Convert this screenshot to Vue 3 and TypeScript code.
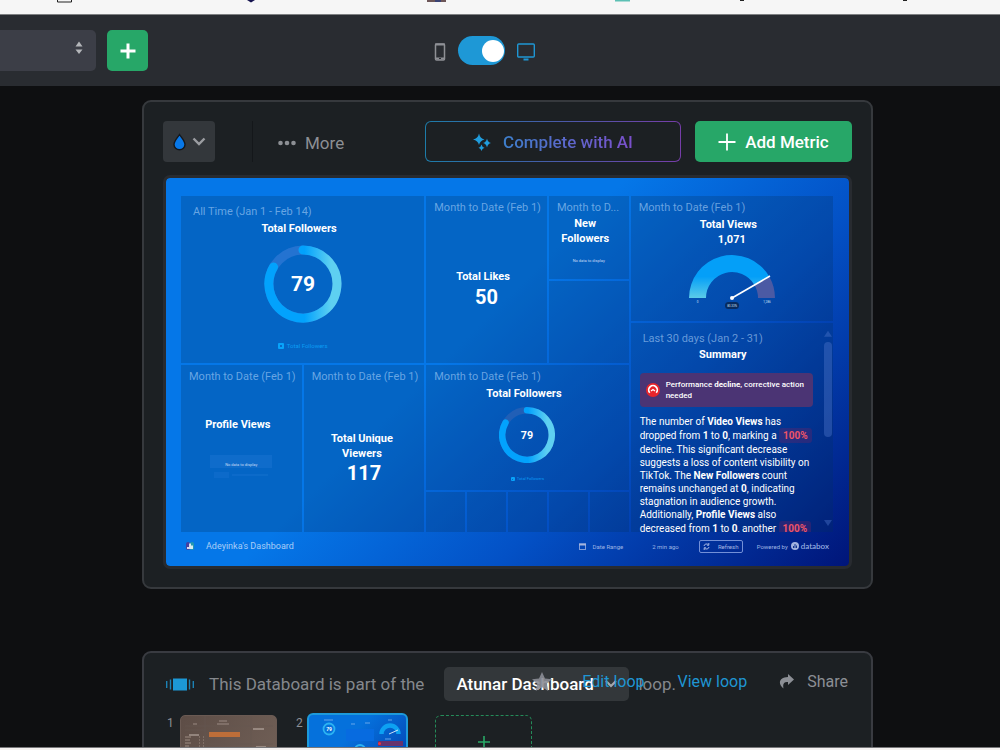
<script setup lang="ts">
import { ref } from 'vue'

interface ThumbRow { y: number; w: number }

const desktop = ref(true)
const showMain = ref(true)
const showSmall = ref(true)
const loopName = ref('Atunar Dashboard')
const spareTiles = ['e1', 'e2', 'e3', 'e4', 'e5']
const thumbRows: ThumbRow[] = [
  { y: 21, w: 6 }, { y: 24, w: 5 }, { y: 27, w: 6 }, { y: 30, w: 4 },
]
</script>

<template>
  <div class="app">
    <div class="tabstrip">
      <svg width="1000" height="14" viewBox="0 0 1000 14" aria-hidden="true">
        <path d="M57.500 0V2H71.500V0" fill="none" stroke="#222" />
        <path d="M247 0h8l-4 2.500z" fill="#15134f" />
        <rect x="427" width="19" height="2" fill="#6d5658" />
        <rect x="435" width="6" height="2" fill="#3b4474" />
        <rect x="615" width="15" height="1.500" fill="#5cc0b4" />
        <rect x="740" width="4" height="1" fill="#222" />
        <rect x="903" width="4" height="1" fill="#222" />
      </svg>
    </div>

    <header class="topbar">
      <div class="picker">
        <select class="board-select" aria-label="Databoard"><option></option></select>
        <svg class="updown" width="8" height="14" viewBox="0 0 8 14" aria-hidden="true">
          <path d="M0.500 5.500L4 0.500 7.500 5.500zM0.500 8.500L4 13 7.500 8.500z" fill="#b4b6ba" />
        </svg>
        <button class="add-board" aria-label="Add databoard">
          <svg width="16" height="16" viewBox="0 0 16 16"><path d="M8 0.500v15M0.500 8h15" stroke="#fff" stroke-width="3" /></svg>
        </button>
      </div>
      <div class="device">
        <svg width="12" height="18" viewBox="0 0 12 18" aria-hidden="true">
          <rect x="1.500" y="1" width="9" height="16" rx="1" fill="none" stroke="#8e9095" stroke-width="1.500" />
          <path d="M1 1.500h10M1 15.500h10" stroke="#8e9095" stroke-width="2.200" />
          <rect x="5" y="15" width="2" height="1" fill="#292c31" />
        </svg>
        <input v-model="desktop" class="switch" type="checkbox" aria-label="Desktop view" />
        <svg width="18" height="18" viewBox="0 0 18 18" aria-hidden="true">
          <rect x="0.700" y="1" width="16.600" height="13" rx="1" fill="none" stroke="#1f96d3" stroke-width="1.400" />
          <rect x="6.500" y="15.500" width="5" height="2" fill="#1f96d3" />
        </svg>
      </div>
    </header>

    <main class="stage">
      <section class="card designer">
        <div class="toolbar">
          <button class="color-btn" aria-label="Board colour">
            <svg width="13" height="18" viewBox="0 0 13 18">
              <path d="M6.500 1.500C4.500 4.800 1 8 1 11.500a5.500 5.200 0 0 0 11 0C12 8 8.500 4.800 6.500 1.500z" fill="#0878e8" stroke="#14181d" stroke-width="1.400" />
            </svg>
            <svg width="14" height="9" viewBox="0 0 14 9"><path d="M1.500 1.500L7 7l5.500-5.500" fill="none" stroke="#9b9da1" stroke-width="2.400" /></svg>
          </button>
          <span class="divider"></span>
          <button class="more-btn">
            <svg width="18" height="6" viewBox="0 0 18 6"><g fill="#8c8f94"><circle cx="2.500" cy="3" r="2.300" /><circle cx="9" cy="3" r="2.300" /><circle cx="15.500" cy="3" r="2.300" /></g></svg>
            More
          </button>
          <button class="ai-btn">
            <svg width="18" height="18" viewBox="0 0 18 18">
              <path d="M6 0.500Q7 5.500 11.500 6.500 7 7.500 6 12 5 7.500 0 6.500 5 5.500 6 0.500zM14 5.500Q14.800 9.200 18 10 14.800 10.800 14 14.500 13.200 10.800 10 10 13.200 9.200 14 5.500zM8.500 11.500Q9 14 11.500 14.700 9 15.400 8.500 18 8 15.400 5.500 14.700 8 14 8.500 11.500z" fill="#209ddd" />
            </svg>
            <span>Complete with AI</span>
          </button>
          <button class="metric-btn">
            <svg width="18" height="18" viewBox="0 0 18 18"><path d="M9 0.500v17M0.500 9h17" stroke="#fff" stroke-width="1.800" /></svg>
            Add Metric
          </button>
        </div>

        <div class="board">
          <div class="tiles">
            <article class="tile t-followers">
              <p class="period">All Time (Jan 1 - Feb 14)</p>
              <h3>Total Followers</h3>
              <svg class="ring" width="78" height="78" viewBox="0 0 78 78">
                <defs>
                  <linearGradient id="ringFill" gradientUnits="userSpaceOnUse" x1="0" y1="0" x2="78" y2="0">
                    <stop offset=".52" stop-color="#02a2fd" /><stop offset=".86" stop-color="#5ed0f1" />
                  </linearGradient>
                </defs>
                <circle cx="39" cy="39" r="34" fill="none" stroke="#2473d1" stroke-width="9" />
                <path d="M39 5A34 34 0 1 1 9.500 22" fill="none" stroke="url(#ringFill)" stroke-width="9" stroke-linecap="round" />
                <text x="39" y="46" text-anchor="middle" class="ring-num">79</text>
              </svg>
              <label class="legend"><input v-model="showMain" type="checkbox" />Total Followers</label>
            </article>

            <article class="tile t-likes">
              <p class="period">Month to Date (Feb 1)</p>
              <h3>Total Likes</h3>
              <p class="value">50</p>
            </article>

            <article class="tile t-new">
              <p class="period">Month to D...</p>
              <h3>New Followers</h3>
              <p class="nodata">No data to display</p>
            </article>

            <article class="tile t-views">
              <p class="period">Month to Date (Feb 1)</p>
              <h3>Total Views</h3>
              <p class="subvalue">1,071</p>
              <svg class="gauge" width="88" height="56" viewBox="0 0 88 56">
                <defs>
                  <linearGradient id="gaugeFill" x1="0" y1="0" x2="0" y2="1">
                    <stop offset=".5" stop-color="#049ff8" /><stop offset="1" stop-color="#5bcbe8" />
                  </linearGradient>
                </defs>
                <path d="M1 44A43 43 0 0 1 81.200 22.500L66.500 31A26 26 0 0 0 18 44z" fill="url(#gaugeFill)" />
                <path d="M81.200 22.500A43 43 0 0 1 87 44H70A26 26 0 0 0 66.500 31z" fill="#4b5aa4" />
                <path d="M44 44L82 22" stroke="#fff" stroke-width="1.600" />
                <circle cx="44" cy="44" r="2" fill="#fff" />
                <rect x="37" y="48" width="14" height="7" rx="3.500" fill="#082b5e" />
                <g class="tiny" text-anchor="middle">
                  <text x="9.500" y="49">0</text>
                  <text x="79" y="49">1,286</text>
                  <text x="44" y="53">83.33%</text>
                </g>
              </svg>
            </article>

            <article class="tile t-blank"></article>

            <article class="tile t-summary">
              <div class="summary-main">
                <p class="period">Last 30 days (Jan 2 - 31)</p>
                <h3>Summary</h3>
                <div class="alert">
                  <svg width="14" height="14" viewBox="0 0 14 14" aria-hidden="true">
                    <circle cx="7" cy="7" r="7" fill="#e8252b" />
                    <path d="M3.800 9.800A4.300 4.300 0 1 1 10.200 9.800" fill="none" stroke="#fff" stroke-width="1.700" />
                    <path d="M5 8l2-1.500L9 8" fill="none" stroke="#fff" stroke-width="1.400" />
                  </svg>
                  <p>Performance <b>decline</b>, corrective action needed</p>
                </div>
                <p class="story">
                  The number of <b>Video Views</b> has<br />
                  dropped from <b>1</b> to <b>0</b>, marking a <span class="pill">100%</span><br />
                  decline. This significant decrease<br />
                  suggests a loss of content visibility on<br />
                  TikTok. The <b>New Followers</b> count<br />
                  remains unchanged at <b>0</b>, indicating<br />
                  stagnation in audience growth.<br />
                  Additionally, <b>Profile Views</b> also<br />
                  decreased from <b>1</b> to <b>0</b>, another <span class="pill">100%</span>
                </p>
              </div>
              <div class="scroll" aria-hidden="true">
                <i class="up"></i><i class="thumb"></i><i class="down"></i>
              </div>
            </article>

            <article class="tile t-profile">
              <p class="period">Month to Date (Feb 1)</p>
              <h3>Profile Views</h3>
              <p class="nodata boxed">No data to display</p>
              <div class="ghost"><i></i><i></i></div>
            </article>

            <article class="tile t-unique">
              <p class="period">Month to Date (Feb 1)</p>
              <h3>Total Unique Viewers</h3>
              <p class="value">117</p>
            </article>

            <article class="tile t-small">
              <p class="period">Month to Date (Feb 1)</p>
              <h3>Total Followers</h3>
              <svg class="ring" width="56" height="56" viewBox="0 0 78 78">
                <circle cx="39" cy="39" r="34.500" fill="none" stroke="#215fb6" stroke-width="9" />
                <path d="M39 4.500A34.500 34.500 0 1 1 9.100 21.700" fill="none" stroke="url(#ringFill)" stroke-width="9" stroke-linecap="round" />
                <text x="39" y="44" text-anchor="middle" class="ring-num-s">79</text>
              </svg>
              <label class="legend tiny-legend"><input v-model="showSmall" type="checkbox" />Total Followers</label>
            </article>

            <article v-for="s in spareTiles" :key="s" class="tile t-spare"></article>
          </div>

          <footer class="board-foot">
            <svg width="8" height="8" viewBox="0 0 8 8" aria-hidden="true">
              <rect width="4" height="8" rx="2" fill="#45409f" /><rect x="4" width="4" height="8" rx="2" fill="#2297b0" />
              <path d="M2 7V5M4 7V1.500M6 7V3.500" stroke="#fff" stroke-width="1.600" />
            </svg>
            <span class="owner">Adeyinka's Dashboard</span>
            <svg class="cal" width="7" height="7" viewBox="0 0 7 7" aria-hidden="true"><rect x=".5" y="1" width="6" height="5.500" fill="none" stroke="#7f9cda" /><path d="M0 1.500h7" stroke="#a5b5dd" stroke-width="2" /></svg>
            <span class="range">Date Range</span>
            <span class="ago">2 min ago</span>
            <button class="refresh">
              <svg width="7" height="7" viewBox="0 0 7 7"><path d="M1 3A2.500 2.500 0 0 1 5.500 2M6 4A2.500 2.500 0 0 1 1.500 5M5.800 0v2.200H4M1.200 7V4.800H3" fill="none" stroke="#a8b8e4" /></svg>
              Refresh
            </button>
            <span class="powered">Powered by</span>
            <svg width="8" height="8" viewBox="0 0 8 8" aria-hidden="true"><circle cx="4" cy="4" r="4" fill="#a2b3df" /><path d="M2.500 6V4M4 6V2M5.500 6V3.500" stroke="#12348f" /></svg>
            <span class="brand">databox</span>
          </footer>
        </div>
      </section>

      <section class="card loop">
        <div class="loop-head">
          <svg width="28" height="13" viewBox="0 0 28 13" aria-hidden="true">
            <rect x="7" y="0.500" width="14" height="12" fill="#1c98d6" />
            <path d="M0.700 3v7M23.500 1.500v10M4.500 1.500v10M27.300 3v7" stroke="#1c82b5" stroke-width="1.400" />
          </svg>
          <span class="lead">This Databoard is part of the</span>
          <span class="loop-pick">
            <select v-model="loopName" aria-label="Loop"><option>Atunar Dashboard</option></select>
            <svg width="12" height="8" viewBox="0 0 12 8" aria-hidden="true"><path d="M1 1l5 5 5-5" fill="none" stroke="#a6a8ac" stroke-width="2.200" /></svg>
          </span>
          <span class="tail">loop.</span>
          <nav class="actions">
            <svg width="20" height="19" viewBox="0 0 20 19" aria-hidden="true"><path d="M10 0l3 6.500 7 .7-5.300 4.600L16.300 19 10 15.200 3.700 19l1.600-7.200L0 7.200l7-.7z" fill="#8b8d96" fill-opacity=".9" /></svg>
            <a class="edit" href="#edit">Edit loop</a>
            <a class="view" href="#view">View loop</a>
            <a class="share" href="#share">
              <svg width="15" height="15" viewBox="0 0 15 15" aria-hidden="true"><path d="M9 0l6 5.500L9 11V8C5 7.500 3.500 9.500 4.500 14.500 -1.500 9.500 0 3.500 9 3z" fill="#8c8f95" /></svg>
              Share
            </a>
          </nav>
        </div>
        <div class="thumbs">
          <span class="num">1</span>
          <div class="thumb-a">
            <svg width="96" height="40" viewBox="0 0 96 40" aria-hidden="true">
              <path d="M4 14h20M24 0v40M70 0v40M4 10h88M28 28h64" stroke="#675750" stroke-width=".6" />
              <path d="M12 8h4M38 5h8M36 8h12" stroke="#aa9a92" stroke-width=".8" />
              <rect x="28" y="16" width="31" height="5" fill="#bd6e39" />
              <path d="M72 13h11M8 19h10M75 31h10" stroke="#c5b8b0" />
              <path v-for="r in thumbRows" :key="r.y" :d="`M4 ${r.y}h${r.w}M18 ${r.y}h1M22 ${r.y}h1`" stroke="#9b8a80" />
            </svg>
          </div>
          <span class="num">2</span>
          <div class="thumb-b">
            <svg width="97" height="40" viewBox="0 0 97 40" aria-hidden="true">
              <path d="M15 5h9M79 5h4M42 9h4M56 8h5M76 24h6" stroke="#7fb5ef" stroke-width=".8" />
              <circle cx="20" cy="14" r="5.500" fill="none" stroke="#2bb3f2" stroke-width="1.800" />
              <text x="20" y="16" text-anchor="middle" class="thumb-num">79</text>
              <rect x="37" y="14" width="28" height="12" fill="#076be0" />
              <path d="M72.500 19A8.500 8.500 0 0 1 89.500 19" fill="none" stroke="#0da1f2" stroke-width="4.500" />
              <path d="M80 19l9-4" stroke="#fff" stroke-width=".8" />
              <rect x="69" y="26" width="25" height="5" fill="#66326d" />
              <circle cx="70.500" cy="28.500" r="1.500" fill="#ee343b" />
              <circle cx="51" cy="35" r="5" fill="none" stroke="#2bb3f2" stroke-width="2" />
            </svg>
          </div>
          <button class="thumb-add" aria-label="Add to loop">
            <svg width="12" height="12" viewBox="0 0 12 12"><path d="M6 0v12M0 6h12" stroke="#28a866" stroke-width="1.600" /></svg>
          </button>
        </div>
      </section>
    </main>
    <div class="bottom-edge"></div>
  </div>
</template>

<style>
body { margin: 0; background: #0e0f11; }
</style>

<style scoped>
* { box-sizing: border-box; }
.app { height: 100vh; display: flex; flex-direction: column; overflow: hidden; font-family: Roboto, "Liberation Sans", sans-serif; color: #fff; }
p, h3 { margin: 0; }
svg { flex: none; }
button, select, input { font-family: inherit; margin: 0; }
button { border: 0; padding: 0; background: none; color: inherit; display: flex; align-items: center; justify-content: center; }
a { text-decoration: none; }

.tabstrip { height: 15px; flex: none; background: #f6f6f6; border-bottom: 1px solid #7e8082; overflow: hidden; }
.tabstrip svg { display: block; }

.topbar { flex: none; height: 71px; background: #292c31; display: grid; grid-template-columns: 1fr auto 1fr; align-items: center; padding-right: 31px; }
.picker { display: flex; align-items: center; position: relative; width: 148px; gap: 11px; }
.board-select { appearance: none; width: 96px; height: 41px; border: 0; border-radius: 0 5px 5px 0; background: #3c3e47; }
.updown { position: absolute; left: 75px; top: 11px; pointer-events: none; }
.add-board { width: 41px; height: 41px; border-radius: 5px; background: #27a768; }
.device { display: flex; align-items: center; gap: 12px; }
.device > svg { margin-top: 2px; }
.switch { appearance: none; width: 47px; height: 29px; border-radius: 15px; background: #1e98d6; padding: 3px; display: flex; align-items: center; }
.switch::before { content: ""; width: 22px; height: 22px; border-radius: 50%; background: #fff; }
.switch:checked { justify-content: flex-end; padding-right: 1px; }

.stage { flex: 1; min-height: 0; overflow: hidden; background: #0e0f11; padding: 14px 127px 0 142px; display: flex; flex-direction: column; gap: 62px; }
.card { flex: none; background: #1c2023; border: 2px solid #36393d; border-radius: 9px; }
.designer { padding: 19px 19px 18px; }
.toolbar { display: flex; align-items: center; height: 41px; margin-bottom: 13px; }
.color-btn { width: 52px; height: 41px; border-radius: 4px; background: #33373b; gap: 6px; }
.divider { width: 1px; height: 41px; background: #14171a; margin-left: 37px; }
.more-btn { color: #8c8f94; font-size: 17px; gap: 9px; margin: 2px auto 0 25px; }
.ai-btn { width: 256px; height: 41px; gap: 12px; border: 1px solid transparent; border-radius: 6px; background: linear-gradient(#1c2023, #1c2023) padding-box, linear-gradient(90deg, #1d7ca9, #3e62a8 40%, #763da8) border-box; font-size: 17px; font-weight: 500; }
.ai-btn span { background: linear-gradient(90deg, #3d7fcb, #7b4fcb); background-clip: text; color: transparent; }
.metric-btn { width: 157px; height: 41px; margin-left: 14px; gap: 9px; border-radius: 5px; background: #27a768; font-size: 17px; font-weight: 500; }

.board { border: 3px solid #282b30; border-radius: 7px; padding: 18px 16px 0 15px; background: linear-gradient(135deg, #0577e8 43%, #0351c6 67%, #001579) padding-box, #282b30 border-box; }
.tiles { height: 336px; display: grid; grid-template-columns: repeat(16, minmax(0, 1fr)); grid-template-rows: repeat(8, minmax(0, 1fr)); gap: 2px; }
.tile { background: rgba(5, 47, 90, .25); min-width: 0; overflow: hidden; padding-top: 4px; display: flex; flex-direction: column; align-items: center; }
.period { flex: none; align-self: stretch; padding-left: 8px; font-size: 11px; line-height: 15px; color: rgba(190, 222, 255, .55); white-space: nowrap; }
h3 { flex: none; font-size: 11px; line-height: 15px; font-weight: 700; text-align: center; margin-right: 7px; }
.value { font-size: 20px; line-height: 24px; font-weight: 700; }
.subvalue { font-size: 11px; line-height: 16px; font-weight: 700; }
.nodata { font-size: 4px; line-height: 6px; color: #c9dbf5; }

.t-followers { grid-column: 1 / 7; grid-row: 1 / 5; padding-top: 8px; }
.t-followers .period { padding-left: 12px; }
.t-followers h3 { margin-top: 2px; }
.t-followers .ring { margin-top: 9px; }
.ring { display: block; }
.ring-num { fill: #fff; font-size: 21px; font-weight: 700; }
.ring-num-s { fill: #fff; font-size: 15px; font-weight: 700; }
.legend { display: flex; align-items: center; gap: 3px; margin-top: 19px; color: #0b9cf3; font-size: 6px; line-height: 8px; }
.legend input { appearance: none; width: 6px; height: 6px; border-radius: 1px; background: #08a3fa; display: grid; place-content: center; }
.legend input:checked::before { content: ""; width: 2px; height: 2px; background: #0a68c8; }
.tiny-legend { font-size: 4px; line-height: 6px; margin-top: 13px; gap: 2px; }
.tiny-legend input { width: 4px; height: 4px; }
.tiny-legend input:checked::before { width: 1px; height: 1px; }

.t-likes { grid-column: 7 / 10; grid-row: 1 / 5; }
.t-likes h3 { margin-top: 54px; }
.t-likes .value { margin-top: 1px; }
.t-new { grid-column: 10 / 12; grid-row: 1 / 3; }
.t-new h3 { width: 60px; margin-top: 1px; }
.t-new .nodata { margin-top: 12px; }
.t-blank { grid-column: 10 / 12; grid-row: 3 / 5; }
.t-views { grid-column: 12 / 17; grid-row: 1 / 4; }
.t-views h3 { margin-top: 2px; }
.gauge { margin-top: 6px; display: block; }
.tiny { fill: #d5e4fa; font-size: 3px; }
.t-summary { grid-column: 12 / 17; grid-row: 4 / 9; flex-direction: row; align-items: stretch; padding: 8px 1px 0 9px; }
.summary-main { flex: 1; min-width: 0; min-height: 0; display: flex; flex-direction: column; }
.t-summary .period { padding-left: 3px; }
.t-summary h3 { margin: 1px 18px 0 0; }
.alert { flex: none; display: flex; align-items: center; gap: 6px; height: 34px; margin: 11px 11px 8px 0; padding: 0 6px; border-radius: 4px; background: #4b3474; font-size: 8px; line-height: 11px; font-weight: 500; }
.story { flex: none; font-size: 10px; line-height: 13px; white-space: nowrap; }
.story b, .alert b { font-weight: 700; }
.pill { display: inline-block; height: 15px; line-height: 15px; padding: 0 4px; border-radius: 3px; background: rgba(110, 35, 100, .35); color: #ee5468; font-weight: 700; vertical-align: baseline; }
.scroll { width: 8px; flex: none; display: flex; flex-direction: column; align-items: center; padding-bottom: 6px; }
.up, .down { width: 8px; height: 6px; background: rgba(80, 120, 205, .4); clip-path: polygon(50% 0, 100% 100%, 0 100%); }
.down { clip-path: polygon(0 0, 100% 0, 50% 100%); margin-top: auto; }
.thumb { width: 8px; height: 95px; margin-top: 5px; border-radius: 4px; background: rgba(80, 120, 205, .4); }
.t-profile { grid-column: 1 / 4; grid-row: 5 / 9; }
.t-profile h3 { margin-top: 33px; }
.boxed { margin-top: 23px; width: 62px; height: 13px; padding-top: 7px; text-align: center; background: rgba(60, 140, 230, .2); }
.ghost { display: flex; gap: 3px; margin-top: 4px; opacity: .15; }
.ghost i { width: 15px; height: 6px; background: #3c8ce6; }
.ghost i + i { width: 36px; height: 2px; margin-top: 2px; }
.t-unique { grid-column: 4 / 7; grid-row: 5 / 9; }
.t-unique h3 { margin-top: 47px; width: 80px; margin-right: 4px; }
.t-small { grid-column: 7 / 12; grid-row: 5 / 8; }
.t-small h3 { margin-top: 2px; }
.t-small .ring { margin-top: 6px; }
.t-spare { grid-row: 8; }

.board-foot { height: 34px; padding: 0 4px 6px 5px; display: flex; align-items: center; font-size: 6px; color: #9eb5e4; }
.owner { font-size: 9px; color: #a9cdf7; margin-left: 12px; }
.cal { margin-left: auto; }
.range { margin-left: 7px; }
.ago { margin-left: 29px; }
.refresh { width: 44px; height: 13px; border: 1px solid #7390d8; border-radius: 2px; margin-left: 20px; font-size: 6px; gap: 8px; color: #a8b8e4; }
.powered { margin-left: 14px; }
.powered + svg { margin-left: 3px; }
.brand { font-size: 8px; font-weight: 500; margin-left: 2px; font-family: Lato, sans-serif; }

.loop { height: 150px; padding: 14px 22px 0; border-color: #393b41; }
.loop-head { position: relative; display: flex; align-items: center; height: 34px; font-size: 17px; color: #85888d; }
.lead { margin-left: 15px; }
.loop-pick { position: relative; display: flex; align-items: center; margin-left: 20px; }
.loop-pick select { appearance: none; height: 34px; width: 185px; border: 0; border-radius: 5px; background: #33373a; color: #fff; font-size: 17px; font-weight: 500; padding: 0 12px; }
.loop-pick svg { position: absolute; right: 12px; top: 13px; pointer-events: none; }
.tail { margin-left: 9px; }
.actions { position: absolute; right: 1px; top: 3px; height: 22px; display: flex; align-items: center; font-size: 16px; }
.actions a { color: #1f96d3; }
.edit { margin-left: 30px; }
.view { margin-left: 33px; }
.actions .share { margin-left: 32px; display: flex; align-items: center; gap: 13px; color: #8c8f95; }
.thumbs { display: flex; align-items: flex-start; margin-top: 12px; }
.num { width: 14px; font-size: 12px; line-height: 14px; margin-top: 3px; padding-left: 1px; color: #8c8f94; }
.thumb-a { width: 97px; height: 60px; margin-top: 2px; border: 1px solid #6a5a53; border-radius: 5px 5px 0 0; background: linear-gradient(120deg, #5d4d46, #716057); overflow: hidden; }
.thumb-a + .num { margin-left: 18px; width: 12px; }
.thumb-b { width: 101px; height: 60px; border: 2px solid #1d9adb; border-radius: 6px 6px 0 0; background: linear-gradient(135deg, #0571dc 40%, #033fae); overflow: hidden; }
.thumb-num { fill: #fff; font-size: 5px; font-weight: 700; }
.thumb-add { width: 97px; height: 53px; margin: 2px 0 0 27px; border: 1px dashed #258c59; border-radius: 6px; }
.bottom-edge { flex: none; height: 3px; background: #f5f2f1; border-top: 1px solid #77777a; }
</style>
